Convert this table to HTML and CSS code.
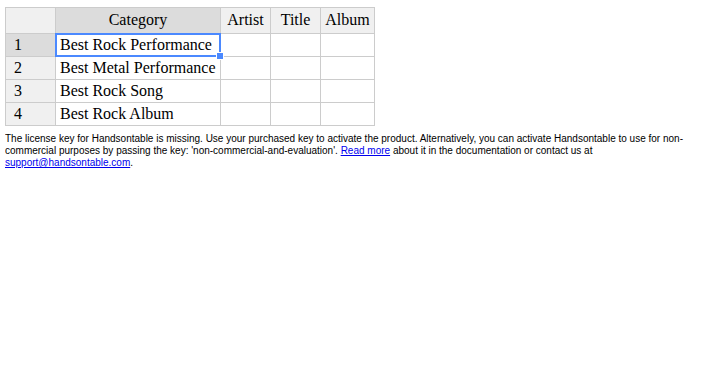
FILE: index.html
```html
<!DOCTYPE html>
<html lang="en">
<head>
<meta charset="UTF-8">
<title>Grammy categories</title>
<meta name="viewport" content="width=device-width,initial-scale=1">
<link rel="stylesheet" href="styles.css">
</head>
<body>
<!-- spreadsheet grid -->
<div class="sheet">
  <div class="cell head corner"></div>
  <div class="cell head col on">Category</div>
  <div class="cell head col">Artist</div>
  <div class="cell head col">Title</div>
  <div class="cell head col">Album</div>

  <div class="cell head row on">1</div>
  <div class="cell data current">Best Rock Performance<span class="sel"></span><span class="handle"></span></div>
  <div class="cell data"></div>
  <div class="cell data"></div>
  <div class="cell data"></div>

  <div class="cell head row">2</div>
  <div class="cell data">Best Metal Performance</div>
  <div class="cell data"></div>
  <div class="cell data"></div>
  <div class="cell data"></div>

  <div class="cell head row">3</div>
  <div class="cell data">Best Rock Song</div>
  <div class="cell data"></div>
  <div class="cell data"></div>
  <div class="cell data"></div>

  <div class="cell head row">4</div>
  <div class="cell data">Best Rock Album</div>
  <div class="cell data"></div>
  <div class="cell data"></div>
  <div class="cell data"></div>
</div>

<!-- license notice -->
<p class="notice">The license key for Handsontable is missing. Use your purchased key to activate the product. Alternatively, you can activate Handsontable to use for non-commercial purposes by passing the key: 'non-commercial-and-evaluation'. <a href="#">Read more</a> about it in the documentation or contact us at <a href="#">support@handsontable.com</a>.</p>
</body>
</html>
```

FILE: styles.css
```css
body{margin:7px 5px;background:#fff;color:#000;font-family:"Liberation Serif","Times New Roman",serif}
/* grid */
.sheet{display:inline-grid;grid-template-columns:50px 165px 50px 50px 54px;
       grid-template-rows:26px repeat(4,23px);
       border-left:1px solid #ccc;border-top:1px solid #ccc}
.cell{box-sizing:border-box;border-right:1px solid #ccc;border-bottom:1px solid #ccc;
      font-size:16px;line-height:21px;white-space:nowrap;overflow:visible;position:relative}
.head{background:#f0f0f0}
.head.col{text-align:center;line-height:24px}
.head.row{padding-left:8px}
.head.on{background:#dcdcdc}
.data{padding-left:4px;background:#fff}
/* selection overlay */
.sel{position:absolute;left:-1px;top:-1px;right:-1px;bottom:-1px;border:2px solid #4b89ff;pointer-events:none}
.handle{position:absolute;right:-4px;bottom:-4px;width:6px;height:6px;background:#4b89ff;border:1px solid #fff;z-index:2}
/* notice */
.notice{margin:7px 0 0;font-family:"Liberation Sans",Arial,Helvetica,sans-serif;font-size:10px;line-height:12px;color:#000}
.notice a{color:#0000ee;text-decoration:underline}
```
